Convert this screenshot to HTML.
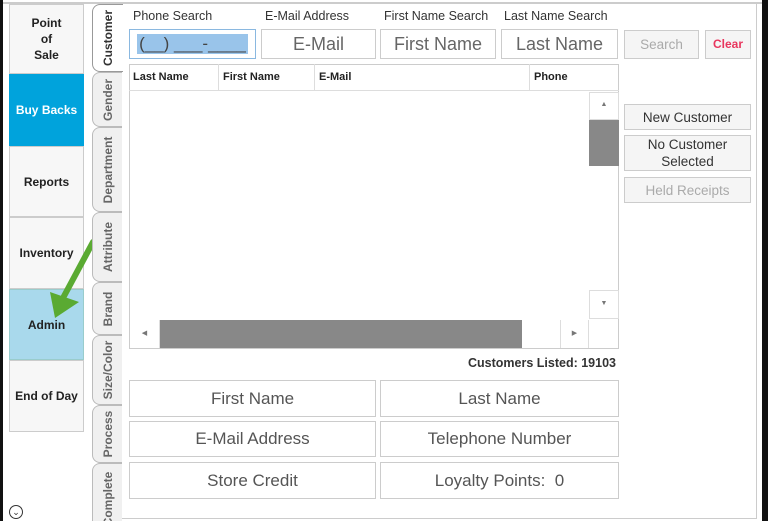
<!DOCTYPE html>
<html style="overflow:hidden;width:768px;height:521px"><head><style>
*{margin:0;padding:0;box-sizing:border-box}
body{width:768px;height:521px;background:#fff;position:relative;overflow:hidden;font-family:"Liberation Sans",sans-serif;color:#333}
.a{position:absolute}
.nav{position:absolute;left:9px;width:75px;background:#f7f7f7;border:1px solid #ccc;font-weight:bold;font-size:12px;display:flex;align-items:center;justify-content:center;text-align:center;line-height:16px;color:#222}
.tab{position:absolute;left:92px;width:30px;background:#f0f0f0;border:1px solid #bbb;border-right:none;border-radius:8px 0 0 8px;}
.tab span{position:absolute;left:50%;top:50%;transform:translate(-50%,-50%) rotate(-90deg);font-size:12px;font-weight:bold;color:#666;white-space:nowrap}
.lbl{position:absolute;top:9px;font-size:12.5px;color:#333}
.inp{position:absolute;top:29px;height:30px;border:1px solid #ccc;font-size:18px;color:#666;display:flex;align-items:center;justify-content:center}
.btn{position:absolute;border:1px solid #ccc;background:#f5f5f5;font-size:13.5px;color:#333;display:flex;align-items:center;justify-content:center;text-align:center;line-height:17px}
.fld{position:absolute;border:1px solid #ccc;font-size:17px;color:#555;display:flex;align-items:center;justify-content:center}
.hd{position:absolute;top:64px;height:27px;border-right:1px solid #ddd;font-size:11px;font-weight:bold;padding-left:4px;line-height:27px;color:#222}
</style></head><body>
<div class="a" style="left:0;top:0;width:3px;height:521px;background:#111"></div>
<div class="a" style="left:762px;top:0;width:6px;height:521px;background:#111"></div>
<div class="a" style="left:3px;top:2px;width:759px;height:2px;background:#ccc"></div>

<div class="nav" style="top:4px;height:70px">Point<br>of<br>Sale</div>
<div class="nav" style="top:74px;height:72px;background:#00a3dc;color:#fff;border-color:#00a3dc">Buy Backs</div>
<div class="nav" style="top:146px;height:71px">Reports</div>
<div class="nav" style="top:217px;height:72px">Inventory</div>
<div class="nav" style="top:289px;height:71px;background:#a9d9ec;border-color:#9cc">Admin</div>
<div class="nav" style="top:360px;height:72px">End of Day</div>
<div class="a" style="left:9px;top:505px;width:14px;height:14px;border:1px solid #333;border-radius:50%;font-size:9px;text-align:center;line-height:12px">⌄</div>

<svg class="a" style="left:45px;top:236px" width="60" height="85"><line x1="48" y1="6" x2="18" y2="62" stroke="#5aaa32" stroke-width="6" stroke-linecap="round"/><polygon points="5,56 10,82 34,66" fill="#5aaa32"/></svg>

<div class="a" style="left:121px;top:3px;width:636px;height:516px;border:1px solid #ccc;border-top:none"></div>
<div class="tab" style="top:72px;height:55px"><span>Gender</span></div>
<div class="tab" style="top:127px;height:85px"><span>Department</span></div>
<div class="tab" style="top:212px;height:70px"><span>Attribute</span></div>
<div class="tab" style="top:282px;height:53px"><span>Brand</span></div>
<div class="tab" style="top:335px;height:70px"><span>Size/Color</span></div>
<div class="tab" style="top:405px;height:58px"><span>Process</span></div>
<div class="tab" style="top:463px;height:58px;border-bottom:none;border-radius:8px 0 0 0"><span style="top:62%">Complete</span></div>
<div class="tab" style="top:4px;height:68px;background:#fff;width:31px;border-color:#999"><span style="color:#333">Customer</span></div>

<div class="lbl" style="left:133px">Phone Search</div>
<div class="lbl" style="left:265px">E-Mail Address</div>
<div class="lbl" style="left:384px">First Name Search</div>
<div class="lbl" style="left:504px">Last Name Search</div>
<div class="inp" style="left:129px;width:127px;border-color:#8ab8e0"><span style="background:#99c4ea;color:#444;padding:0 2px;font-size:17px">(__) ___-____</span></div>
<div class="inp" style="left:261px;width:115px">E-Mail</div>
<div class="inp" style="left:380px;width:116px">First Name</div>
<div class="inp" style="left:501px;width:117px">Last Name</div>
<div class="btn" style="left:624px;top:30px;width:75px;height:29px;color:#aaa">Search</div>
<div class="btn" style="left:705px;top:30px;width:46px;height:29px;color:#e8365e;font-weight:bold;font-size:12px">Clear</div>

<div class="a" style="left:129px;top:64px;width:490px;height:285px;border:1px solid #ccc"></div>
<div class="a" style="left:129px;top:90px;width:490px;height:1px;background:#ddd"></div>
<div class="hd" style="left:129px;width:90px">Last Name</div>
<div class="hd" style="left:219px;width:96px">First Name</div>
<div class="hd" style="left:315px;width:215px">E-Mail</div>
<div class="hd" style="left:530px;width:60px;border:none">Phone</div>
<div class="a" style="left:589px;top:92px;width:30px;height:28px;border:1px solid #ddd;font-size:7px;color:#777;text-align:center;line-height:24px">▲</div>
<div class="a" style="left:589px;top:120px;width:30px;height:46px;background:#888"></div>
<div class="a" style="left:589px;top:290px;width:30px;height:29px;border:1px solid #ddd;font-size:7px;color:#777;text-align:center;line-height:26px">▼</div>
<div class="a" style="left:130px;top:320px;width:30px;height:28px;border-right:1px solid #ddd;font-size:7px;color:#777;text-align:center;line-height:28px">◀</div>
<div class="a" style="left:160px;top:320px;width:362px;height:28px;background:#888"></div>
<div class="a" style="left:560px;top:320px;width:29px;height:28px;border-left:1px solid #ddd;border-right:1px solid #ddd;font-size:7px;color:#777;text-align:center;line-height:28px">▶</div>

<div class="a" style="left:420px;top:356px;width:196px;text-align:right;font-size:12.5px;font-weight:bold;color:#333">Customers Listed: 19103</div>

<div class="fld" style="left:129px;top:380px;width:247px;height:37px">First Name</div>
<div class="fld" style="left:380px;top:380px;width:239px;height:37px">Last Name</div>
<div class="fld" style="left:129px;top:421px;width:247px;height:36px">E-Mail Address</div>
<div class="fld" style="left:380px;top:421px;width:239px;height:36px">Telephone Number</div>
<div class="fld" style="left:129px;top:462px;width:247px;height:37px">Store Credit</div>
<div class="fld" style="left:380px;top:462px;width:239px;height:37px">Loyalty Points:&nbsp; 0</div>

<div class="btn" style="left:624px;top:104px;width:127px;height:26px">New Customer</div>
<div class="btn" style="left:624px;top:135px;width:127px;height:36px">No Customer<br>Selected</div>
<div class="btn" style="left:624px;top:177px;width:127px;height:26px;color:#aaa">Held Receipts</div>
</body></html>
